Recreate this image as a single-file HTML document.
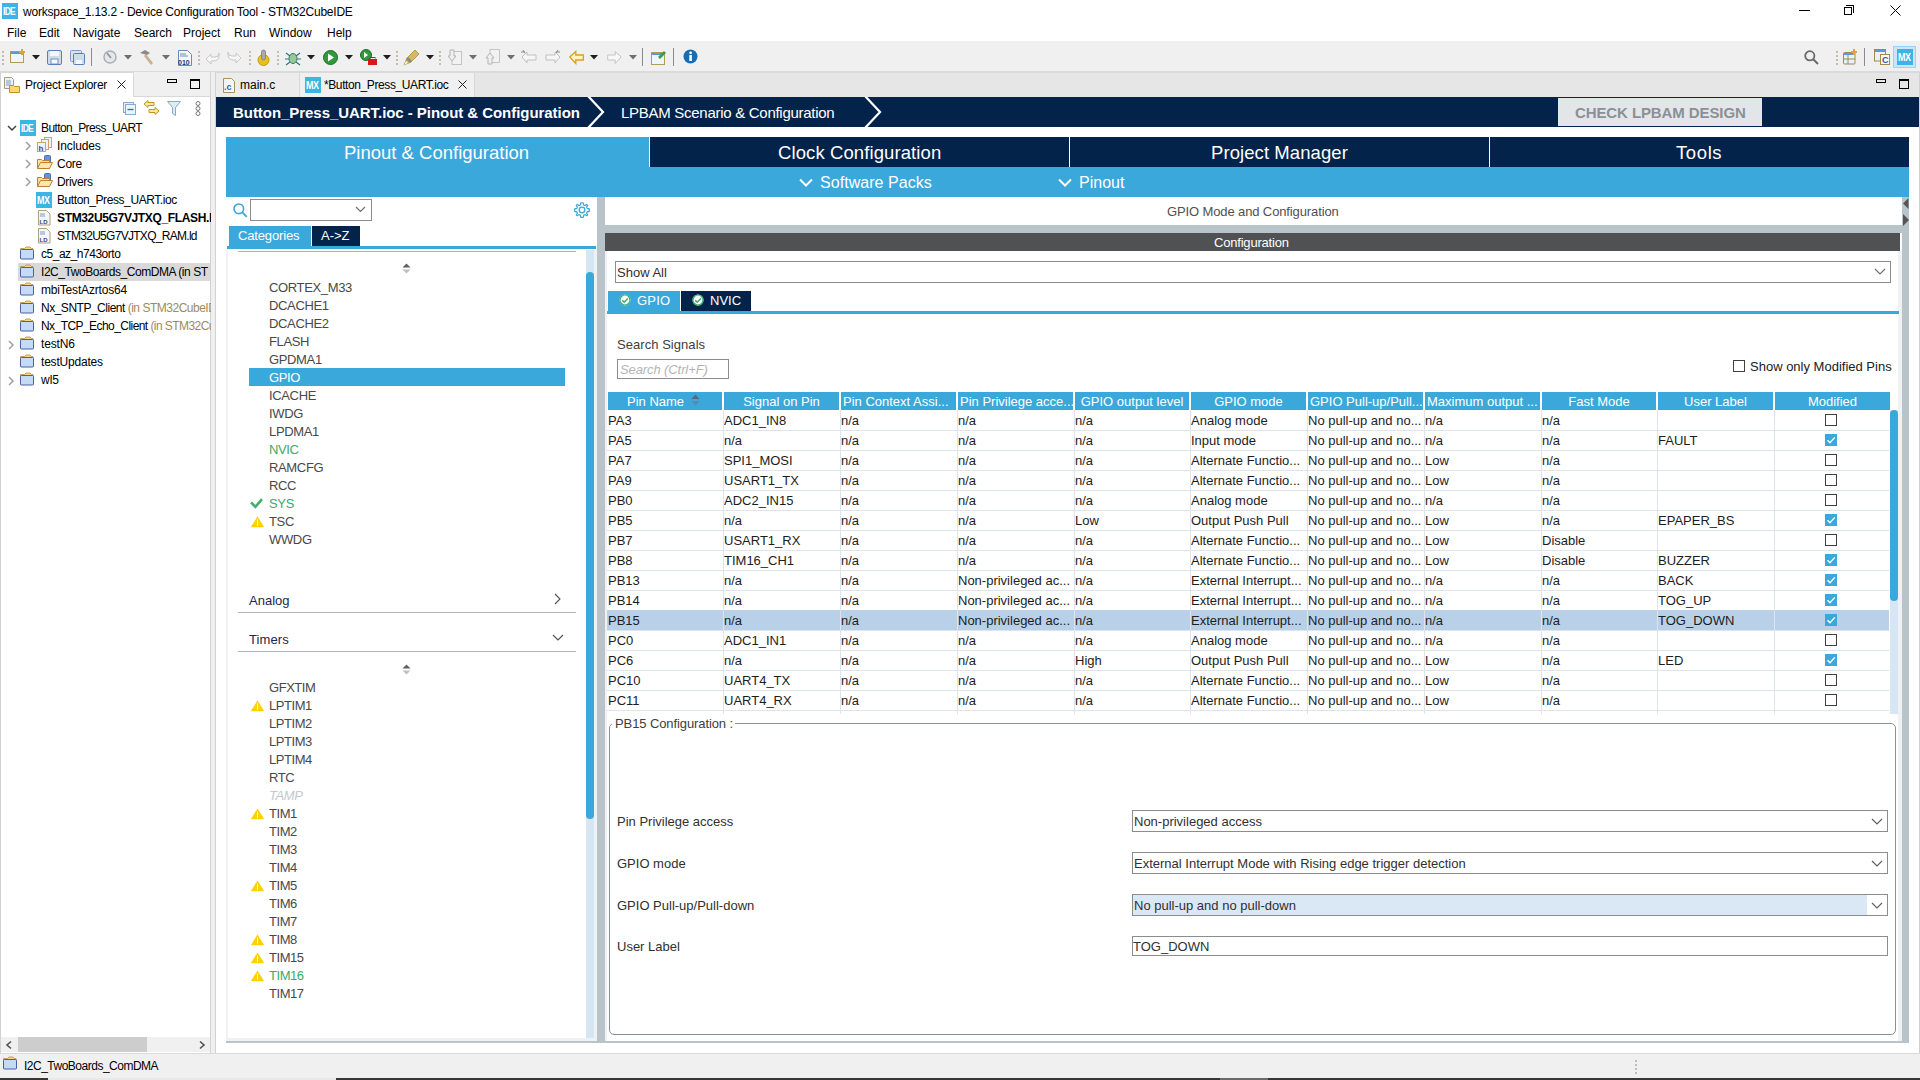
<!DOCTYPE html>
<html><head><meta charset="utf-8">
<style>
*{box-sizing:border-box;margin:0;padding:0}
html,body{width:1920px;height:1080px;overflow:hidden;background:#fff;font-family:"Liberation Sans",sans-serif;font-size:12px;color:#000}
.a{position:absolute}
.t{position:absolute;white-space:nowrap;line-height:1}
svg{position:absolute;overflow:visible}
</style></head><body>

<!-- ===== TITLE BAR ===== -->
<div class="a" style="left:2px;top:3px;width:16px;height:16px;background:#3cb4e6"></div>
<div class="t" style="left:3px;top:7px;font-size:8.5px;font-weight:bold;color:#fff;letter-spacing:-0.7px;transform:scaleY(1.2);transform-origin:0 0">IDE</div>
<div class="t" style="left:23px;top:6px;font-size:12px;letter-spacing:-0.22px">workspace_1.13.2 - Device Configuration Tool - STM32CubeIDE</div>
<div class="a" style="left:1799px;top:10px;width:11px;height:1px;background:#000"></div>
<div class="a" style="left:1844px;top:7px;width:8px;height:8px;border:1px solid #000"></div>
<div class="a" style="left:1846px;top:5px;width:8px;height:8px;border-top:1px solid #000;border-right:1px solid #000"></div>
<svg style="left:1890px;top:5px" width="11" height="11"><path d="M0.5 0.5L10.5 10.5M10.5 0.5L0.5 10.5" stroke="#000" stroke-width="1"/></svg>

<!-- ===== MENU BAR ===== -->
<div class="t" style="left:7px;top:27px">File</div>
<div class="t" style="left:39px;top:27px">Edit</div>
<div class="t" style="left:73px;top:27px">Navigate</div>
<div class="t" style="left:134px;top:27px">Search</div>
<div class="t" style="left:183px;top:27px">Project</div>
<div class="t" style="left:234px;top:27px">Run</div>
<div class="t" style="left:269px;top:27px">Window</div>
<div class="t" style="left:327px;top:27px">Help</div>

<!-- ===== TOOLBAR ===== -->
<div class="a" style="left:0;top:41px;width:1920px;height:30px;background:#f0f0f0"></div>
<div class="a" style="left:0;top:71px;width:1920px;height:1px;background:#dadada"></div>
<div class="a" style="left:2px;top:51px;width:2px;height:2px;background:#c4bcae"></div>
<div class="a" style="left:2px;top:55px;width:2px;height:2px;background:#c4bcae"></div>
<div class="a" style="left:2px;top:59px;width:2px;height:2px;background:#c4bcae"></div>
<div class="a" style="left:2px;top:63px;width:2px;height:2px;background:#c4bcae"></div>
<svg style="left:10px;top:49px" width="16" height="16"><rect x="0.5" y="2.5" width="13" height="11" fill="#eef6fc" stroke="#b09a5c"/><rect x="1" y="3" width="12" height="2" fill="#5a9ad8"/><path d="M12 0v6M9 3h6" stroke="#d8a838" stroke-width="2"/></svg>
<svg style="left:32px;top:55px" width="8" height="5"><path d="M0 0H8L4 4.5Z" fill="#1e1e1e"/></svg>
<svg style="left:47px;top:50px" width="16" height="16"><rect x="0.5" y="0.5" width="14" height="14" rx="1.5" fill="#cfdcec" stroke="#5a7fb8"/><rect x="3" y="1" width="9" height="5" fill="#f4f8fc"/><rect x="4" y="9" width="7" height="5" fill="#f4f8fc" stroke="#5a7fb8" stroke-width="0.8"/></svg>
<svg style="left:70px;top:50px" width="16" height="16"><rect x="0.5" y="0.5" width="11" height="11" rx="1" fill="#d8e2ee" stroke="#7d9cc8"/><rect x="3.5" y="3.5" width="11" height="11" rx="1" fill="#cfdcec" stroke="#5a7fb8"/><rect x="6" y="10" width="6" height="4" fill="#f4f8fc"/></svg>
<div class="a" style="left:91px;top:48px;width:1px;height:18px;background:#8c8c8c"></div>
<svg style="left:103px;top:50px" width="14" height="14"><circle cx="7" cy="7" r="6" fill="#e4e8ec" stroke="#a8b0b8" stroke-width="1.5"/><path d="M4 3l4 5" stroke="#989898" stroke-width="2"/></svg>
<svg style="left:124px;top:55px" width="8" height="5"><path d="M0 0H8L4 4.5Z" fill="#6e6e6e"/></svg>
<svg style="left:139px;top:49px" width="17" height="17"><path d="M1 4l5-3 5 3-3 2z" fill="#8a8a8a"/><path d="M7 5l7 9-2 2-7-9z" fill="#c8b090"/></svg>
<svg style="left:162px;top:55px" width="8" height="5"><path d="M0 0H8L4 4.5Z" fill="#6e6e6e"/></svg>
<svg style="left:178px;top:50px" width="14" height="16"><path d="M0.5 0.5h9l4 4v11h-13z" fill="#f4f6fa" stroke="#6a8ab8"/><path d="M2 4h6M2 6h8" stroke="#6a8ab8"/><text x="0" y="15" font-size="7" font-family="Liberation Sans" font-weight="bold" fill="#1a3a7a">010</text></svg>
<div class="a" style="left:198px;top:51px;width:2px;height:2px;background:#c4bcae"></div>
<div class="a" style="left:198px;top:55px;width:2px;height:2px;background:#c4bcae"></div>
<div class="a" style="left:198px;top:59px;width:2px;height:2px;background:#c4bcae"></div>
<div class="a" style="left:198px;top:63px;width:2px;height:2px;background:#c4bcae"></div>
<svg style="left:205px;top:50px" width="16" height="15"><path d="M1 9l5-5v3h4a4 4 0 0 0 4-4v3a5 5 0 0 1-5 5h-3v3z" fill="#f6f6f6" stroke="#c8c8c8"/></svg>
<svg style="left:227px;top:49px" width="14" height="15"><path d="M14 9l-5-5v3h-4a4 4 0 0 1-4-4v3a5 5 0 0 0 5 5h3v3z" fill="#f6f6f6" stroke="#c8c8c8"/></svg>
<div class="a" style="left:249px;top:51px;width:2px;height:2px;background:#c4bcae"></div>
<div class="a" style="left:249px;top:55px;width:2px;height:2px;background:#c4bcae"></div>
<div class="a" style="left:249px;top:59px;width:2px;height:2px;background:#c4bcae"></div>
<div class="a" style="left:249px;top:63px;width:2px;height:2px;background:#c4bcae"></div>
<svg style="left:256px;top:49px" width="15" height="16"><circle cx="7.5" cy="11" r="5.5" fill="#e8c020" stroke="#c89a10"/><rect x="5.5" y="1" width="4" height="10" rx="2" fill="#a8a8b0" stroke="#7c7c84" stroke-width="0.8"/></svg>
<div class="a" style="left:277px;top:51px;width:2px;height:2px;background:#c4bcae"></div>
<div class="a" style="left:277px;top:55px;width:2px;height:2px;background:#c4bcae"></div>
<div class="a" style="left:277px;top:59px;width:2px;height:2px;background:#c4bcae"></div>
<div class="a" style="left:277px;top:63px;width:2px;height:2px;background:#c4bcae"></div>
<svg style="left:285px;top:50px" width="16" height="15"><ellipse cx="8" cy="8.5" rx="4" ry="5" fill="#9cc890" stroke="#2a7a7a"/><path d="M1 3l4 3M15 3l-4 3M0 9h4M12 9h4M1 15l4-3M15 15l-4-3" stroke="#2a7a7a" stroke-width="1.2"/></svg>
<svg style="left:307px;top:55px" width="8" height="5"><path d="M0 0H8L4 4.5Z" fill="#1e1e1e"/></svg>
<svg style="left:323px;top:50px" width="15" height="15"><circle cx="7.5" cy="7.5" r="7" fill="#2e9a3c" stroke="#1c6e28"/><path d="M5 3.5l6 4-6 4z" fill="#fff"/></svg>
<svg style="left:345px;top:55px" width="8" height="5"><path d="M0 0H8L4 4.5Z" fill="#1e1e1e"/></svg>
<svg style="left:360px;top:49px" width="17" height="17"><circle cx="6" cy="6" r="5.5" fill="#2e9a3c" stroke="#1c6e28"/><path d="M4 3l4 3-4 3z" fill="#fff"/><rect x="8" y="10" width="9" height="6" fill="#d81818"/><rect x="10" y="8.5" width="5" height="2" fill="none" stroke="#d81818"/></svg>
<svg style="left:383px;top:55px" width="8" height="5"><path d="M0 0H8L4 4.5Z" fill="#1e1e1e"/></svg>
<div class="a" style="left:396px;top:51px;width:2px;height:2px;background:#c4bcae"></div>
<div class="a" style="left:396px;top:55px;width:2px;height:2px;background:#c4bcae"></div>
<div class="a" style="left:396px;top:59px;width:2px;height:2px;background:#c4bcae"></div>
<div class="a" style="left:396px;top:63px;width:2px;height:2px;background:#c4bcae"></div>
<svg style="left:403px;top:49px" width="17" height="17"><path d="M1 16l3-7 8-8 4 4-8 8z" fill="#d8b868" stroke="#b08830" stroke-width="0.8"/><path d="M4 9l4 4" stroke="#8a8a8a" stroke-width="3"/><path d="M1 16l2-4 2 2z" fill="#fff8c0"/></svg>
<svg style="left:426px;top:55px" width="8" height="5"><path d="M0 0H8L4 4.5Z" fill="#1e1e1e"/></svg>
<div class="a" style="left:439px;top:51px;width:2px;height:2px;background:#c4bcae"></div>
<div class="a" style="left:439px;top:55px;width:2px;height:2px;background:#c4bcae"></div>
<div class="a" style="left:439px;top:59px;width:2px;height:2px;background:#c4bcae"></div>
<div class="a" style="left:439px;top:63px;width:2px;height:2px;background:#c4bcae"></div>
<svg style="left:447px;top:49px" width="15" height="16"><rect x="5" y="2.5" width="9.5" height="13" fill="#f2f2f2" stroke="#c4c4c4"/><path d="M3 1v6h-2l4 5 4-5h-2v-6z" fill="#f0f0f0" stroke="#b4b4b4"/></svg>
<svg style="left:469px;top:55px" width="8" height="5"><path d="M0 0H8L4 4.5Z" fill="#6e6e6e"/></svg>
<svg style="left:485px;top:49px" width="15" height="16"><rect x="5" y="0.5" width="9.5" height="13" fill="#f2f2f2" stroke="#c4c4c4"/><path d="M3 15v-6h-2l4-5 4 5h-2v6z" fill="#f0f0f0" stroke="#b4b4b4"/></svg>
<svg style="left:507px;top:55px" width="8" height="5"><path d="M0 0H8L4 4.5Z" fill="#6e6e6e"/></svg>
<svg style="left:521px;top:50px" width="17" height="14"><path d="M1 7l5-5v3h9v5h-9v3z" fill="#f6f6f6" stroke="#c0c0c0"/><path d="M2 0l2 3M0 2h4" stroke="#888"/></svg>
<svg style="left:544px;top:50px" width="17" height="14"><path d="M16 7l-5-5v3h-9v5h9v3z" fill="#f6f6f6" stroke="#c0c0c0"/><path d="M14 0l-2 3M16 2h-4" stroke="#888"/></svg>
<svg style="left:569px;top:50px" width="15" height="14"><path d="M0.8 7l6-5.5v3.5h7.5v5h-7.5v3.5z" fill="#fff4c0" stroke="#d8a020" stroke-width="1.3"/></svg>
<svg style="left:590px;top:55px" width="8" height="5"><path d="M0 0H8L4 4.5Z" fill="#1e1e1e"/></svg>
<svg style="left:607px;top:50px" width="15" height="14"><path d="M14.2 7l-6-5.5v3.5h-7.5v5h7.5v3.5z" fill="#f8f8f8" stroke="#c4c4c4" stroke-width="1"/></svg>
<svg style="left:629px;top:55px" width="8" height="5"><path d="M0 0H8L4 4.5Z" fill="#6e6e6e"/></svg>
<div class="a" style="left:642px;top:48px;width:1px;height:18px;background:#8c8c8c"></div>
<svg style="left:651px;top:49px" width="17" height="17"><rect x="0.5" y="3.5" width="13" height="12" fill="#eef6fc" stroke="#b09a5c"/><rect x="1" y="4" width="12" height="2" fill="#5a9ad8"/><path d="M9 10l6-6-2-2-6 6z" fill="#3c9a48"/></svg>
<div class="a" style="left:673px;top:48px;width:1px;height:18px;background:#8c8c8c"></div>
<svg style="left:683px;top:49px" width="15" height="15"><circle cx="7.5" cy="7.5" r="7" fill="#1a6cb0"/><rect x="6.3" y="6" width="2.6" height="6" fill="#fff"/><circle cx="7.6" cy="3.8" r="1.4" fill="#fff"/></svg>
<svg style="left:1804px;top:50px" width="15" height="15"><circle cx="5.8" cy="5.8" r="4.6" fill="none" stroke="#6a6a6a" stroke-width="1.8"/><path d="M9 9l5 5" stroke="#6a6a6a" stroke-width="2"/></svg>
<div class="a" style="left:1836px;top:51px;width:2px;height:2px;background:#c4bcae"></div>
<div class="a" style="left:1836px;top:55px;width:2px;height:2px;background:#c4bcae"></div>
<div class="a" style="left:1836px;top:59px;width:2px;height:2px;background:#c4bcae"></div>
<div class="a" style="left:1836px;top:63px;width:2px;height:2px;background:#c4bcae"></div>
<svg style="left:1843px;top:49px" width="16" height="16"><rect x="0.5" y="3.5" width="11.5" height="11.5" rx="1" fill="#e8f2fa" stroke="#a08a50"/><rect x="1" y="4" width="11" height="2" fill="#5a9ad8"/><path d="M5 6v9M1 10h11" stroke="#a08a50"/><path d="M11 0v6M8 3h6" stroke="#d8a838" stroke-width="2"/></svg>
<div class="a" style="left:1864px;top:48px;width:1px;height:18px;background:#8c8c8c"></div>
<svg style="left:1874px;top:49px" width="16" height="16"><rect x="0.5" y="0.5" width="11" height="11.5" fill="#e8f2fa" stroke="#a08a50"/><rect x="1" y="1" width="10" height="2" fill="#5a9ad8"/><rect x="6.5" y="5.5" width="9" height="10" fill="#f8f8f8" stroke="#a08a50"/><text x="8" y="14" font-size="9" font-weight="bold" font-family="Liberation Sans" fill="#2a5aa0">C</text></svg>
<div class="a" style="left:1893px;top:46px;width:23px;height:22px;background:#cce4f7;border:1px solid #99d1ff"></div>
<div class="a" style="left:1897px;top:49px;width:16px;height:16px;background:#3cb4e6"></div>
<div class="t" style="left:1898px;top:53px;font-size:9px;font-weight:bold;color:#fff;letter-spacing:-0.6px;transform:scaleY(1.15);transform-origin:0 0">MX</div>

<!-- ===== LEFT PANEL ===== -->
<div class="a" style="left:0;top:0;width:211px;height:1080px;overflow:hidden">
<div class="a" style="left:0;top:72px;width:211px;height:982px;border:1px solid #d2d2d2;border-top:none;background:#fff"></div>
<div class="a" style="left:1px;top:72px;width:209px;height:25px;background:#f0f0f0"></div>
<div class="a" style="left:134px;top:96px;width:76px;height:1px;background:#d8d8d8"></div>
<div class="a" style="left:1px;top:72px;width:133px;height:25px;background:#fff;border-right:1px solid #d8d8d8;border-top:1px solid #d8d8d8"></div>
<svg style="left:4px;top:77px" width="16" height="16"><path d="M0.5 0.5h7l2 2v9h-9z" fill="#eef2f8" stroke="#a89a78"/><path d="M2 4h5M2 6h5M2 8h5" stroke="#7a9ad0"/><path d="M5.5 8.5h4l1 1h5v6h-10z" fill="#f8d878" stroke="#c0902a"/></svg>
<div class="t" style="left:25px;top:79px;letter-spacing:-0.2px">Project Explorer</div>
<svg style="left:117px;top:80px" width="9" height="9"><path d="M0.5 0.5L8.5 8.5M8.5 0.5L0.5 8.5" stroke="#202020" stroke-width="1"/></svg>
<div class="a" style="left:167px;top:79px;width:10px;height:4px;border:1.5px solid #000"></div>
<div class="a" style="left:190px;top:79px;width:10px;height:10px;border:1.5px solid #000;border-top-width:2.5px"></div>
<svg style="left:123px;top:102px" width="14" height="13"><rect x="0.5" y="0.5" width="10" height="10" fill="#e6f0fa" stroke="#8aa8d0"/><rect x="2.5" y="2.5" width="10" height="10" fill="#eaf4fc" stroke="#8aa8d0"/><path d="M4.5 7.5h6" stroke="#2a6ab0" stroke-width="1.3"/></svg>
<svg style="left:143px;top:100px" width="17" height="16"><path d="M1 4l4-3.5v2h6v3h-6v2z" fill="#fce8a0" stroke="#c89020"/><path d="M16 11l-4-3.5v2h-6v3h6v2z" fill="#fce8a0" stroke="#c89020"/></svg>
<svg style="left:167px;top:101px" width="14" height="15"><path d="M0.5 0.5h13l-5 6v8l-3 -2v-6z" fill="#dcecf8" stroke="#8aa8c8"/></svg>
<svg style="left:195px;top:101px" width="6" height="15"><circle cx="3" cy="2.5" r="2" fill="none" stroke="#777"/><circle cx="3" cy="7.5" r="2" fill="none" stroke="#777"/><circle cx="3" cy="12.5" r="2" fill="none" stroke="#777"/></svg>
<svg style="left:7px;top:125px" width="10" height="6"><path d="M1 1l4 4 4-4" fill="none" stroke="#404040" stroke-width="1.5"/></svg>
<div class="a" style="left:20px;top:120px;width:16px;height:16px;background:#3cb4e6"></div>
<div class="t" style="left:21px;top:124px;font-size:8.5px;font-weight:bold;color:#fff;letter-spacing:-0.7px;transform:scaleY(1.2);transform-origin:0 0">IDE</div>
<div class="t" style="left:41px;top:122px;letter-spacing:-0.6px">Button_Press_UART</div>
<svg style="left:25px;top:141px" width="6" height="10"><path d="M1 1l4 4-4 4" fill="none" stroke="#a0a0a0" stroke-width="1.5"/></svg>
<svg style="left:37px;top:137px" width="16" height="16"><rect x="7.5" y="0.5" width="7" height="10" fill="#eef2fa" stroke="#c8a860"/><rect x="4.5" y="2.5" width="7" height="10" fill="#eef2fa" stroke="#c8a860"/><rect x="0.5" y="5.5" width="8" height="9" fill="#eef2fa" stroke="#c8a860"/><text x="1.5" y="13.5" font-size="8" font-weight="bold" font-family="Liberation Sans" fill="#3a4a7a">h</text></svg>
<div class="t" style="left:57px;top:140px;letter-spacing:-0.12px">Includes</div>
<svg style="left:25px;top:159px" width="6" height="10"><path d="M1 1l4 4-4 4" fill="none" stroke="#a0a0a0" stroke-width="1.5"/></svg>
<svg style="left:37px;top:155px" width="16" height="16"><rect x="7.5" y="0.5" width="6" height="7" rx="1" fill="#6a90d8" stroke="#4a70b8"/><path d="M0.5 4.5h4l1 1h7v8h-12z" fill="#f8e0a0" stroke="#c08030"/><path d="M0.5 13.5l3-6h12l-3 6z" fill="#fae8b0" stroke="#c08030"/></svg>
<div class="t" style="left:57px;top:158px;letter-spacing:-0.25px">Core</div>
<svg style="left:25px;top:177px" width="6" height="10"><path d="M1 1l4 4-4 4" fill="none" stroke="#a0a0a0" stroke-width="1.5"/></svg>
<svg style="left:37px;top:173px" width="16" height="16"><rect x="7.5" y="0.5" width="6" height="7" rx="1" fill="#6a90d8" stroke="#4a70b8"/><path d="M0.5 4.5h4l1 1h7v8h-12z" fill="#f8e0a0" stroke="#c08030"/><path d="M0.5 13.5l3-6h12l-3 6z" fill="#fae8b0" stroke="#c08030"/></svg>
<div class="t" style="left:57px;top:176px;letter-spacing:-0.33px">Drivers</div>
<div class="a" style="left:36px;top:192px;width:16px;height:16px;background:#3cb4e6"></div>
<div class="t" style="left:37px;top:196px;font-size:9px;font-weight:bold;color:#fff;letter-spacing:-0.6px;transform:scaleY(1.15);transform-origin:0 0">MX</div>
<div class="t" style="left:57px;top:194px;letter-spacing:-0.41px">Button_Press_UART.ioc</div>
<svg style="left:38px;top:210px" width="13" height="16"><path d="M0.5 0.5h8l3.5 3.5v11h-11.5z" fill="#f4f6fa" stroke="#b0a080"/><path d="M2 4h5M2 6h5" stroke="#7a9ad0"/><text x="1.5" y="14" font-size="6" font-weight="bold" font-family="Liberation Sans" fill="#3a4a7a">LD</text></svg>
<div class="t" style="left:57px;top:212px;font-weight:bold;letter-spacing:-0.35px">STM32U5G7VJTXQ_FLASH.ld</div>
<svg style="left:38px;top:228px" width="13" height="16"><path d="M0.5 0.5h8l3.5 3.5v11h-11.5z" fill="#f4f6fa" stroke="#b0a080"/><path d="M2 4h5M2 6h5" stroke="#7a9ad0"/><text x="1.5" y="14" font-size="6" font-weight="bold" font-family="Liberation Sans" fill="#3a4a7a">LD</text></svg>
<div class="t" style="left:57px;top:230px;letter-spacing:-0.71px">STM32U5G7VJTXQ_RAM.ld</div>
<div class="a" style="left:18px;top:263px;width:192px;height:18px;background:#d9d9d9"></div>
<svg style="left:19px;top:245px" width="16" height="16"><path d="M1.5 3.5h4l1.5 -1.5h4l1.5 1.5h1.5v10h-12.5z" fill="#f4d880" stroke="#b89040" stroke-width="0.8"/><rect x="1.5" y="4.5" width="13" height="9.5" rx="1" fill="#c4daf6" stroke="#4860a8"/></svg>
<div class="t" style="left:41px;top:248px;letter-spacing:-0.48px">c5_az_h743orto</div>
<svg style="left:19px;top:263px" width="16" height="16"><path d="M1.5 3.5h4l1.5 -1.5h4l1.5 1.5h1.5v10h-12.5z" fill="#f4d880" stroke="#b89040" stroke-width="0.8"/><rect x="1.5" y="4.5" width="13" height="9.5" rx="1" fill="#c4daf6" stroke="#4860a8"/></svg>
<div class="t" style="left:41px;top:266px;letter-spacing:-0.45px">I2C_TwoBoards_ComDMA (in ST</div>
<svg style="left:19px;top:281px" width="16" height="16"><path d="M1.5 3.5h4l1.5 -1.5h4l1.5 1.5h1.5v10h-12.5z" fill="#f4d880" stroke="#b89040" stroke-width="0.8"/><rect x="1.5" y="4.5" width="13" height="9.5" rx="1" fill="#c4daf6" stroke="#4860a8"/></svg>
<div class="t" style="left:41px;top:284px;letter-spacing:-0.18px">mbiTestAzrtos64</div>
<svg style="left:19px;top:299px" width="16" height="16"><path d="M1.5 3.5h4l1.5 -1.5h4l1.5 1.5h1.5v10h-12.5z" fill="#f4d880" stroke="#b89040" stroke-width="0.8"/><rect x="1.5" y="4.5" width="13" height="9.5" rx="1" fill="#c4daf6" stroke="#4860a8"/></svg>
<div class="t" style="left:41px;top:302px;letter-spacing:-0.49px">Nx_SNTP_Client<span style="color:#a08a5c"> (in STM32CubeIDE</span></div>
<svg style="left:19px;top:317px" width="16" height="16"><path d="M1.5 3.5h4l1.5 -1.5h4l1.5 1.5h1.5v10h-12.5z" fill="#f4d880" stroke="#b89040" stroke-width="0.8"/><rect x="1.5" y="4.5" width="13" height="9.5" rx="1" fill="#c4daf6" stroke="#4860a8"/></svg>
<div class="t" style="left:41px;top:320px;letter-spacing:-0.56px">Nx_TCP_Echo_Client<span style="color:#a08a5c"> (in STM32CubeIDE</span></div>
<svg style="left:8px;top:340px" width="6" height="10"><path d="M1 1l4 4-4 4" fill="none" stroke="#a0a0a0" stroke-width="1.5"/></svg>
<svg style="left:19px;top:335px" width="16" height="16"><path d="M1.5 3.5h4l1.5 -1.5h4l1.5 1.5h1.5v10h-12.5z" fill="#f4d880" stroke="#b89040" stroke-width="0.8"/><rect x="1.5" y="4.5" width="13" height="9.5" rx="1" fill="#c4daf6" stroke="#4860a8"/></svg>
<div class="t" style="left:41px;top:338px;letter-spacing:-0.13px">testN6</div>
<svg style="left:19px;top:353px" width="16" height="16"><path d="M1.5 3.5h4l1.5 -1.5h4l1.5 1.5h1.5v10h-12.5z" fill="#f4d880" stroke="#b89040" stroke-width="0.8"/><rect x="1.5" y="4.5" width="13" height="9.5" rx="1" fill="#c4daf6" stroke="#4860a8"/></svg>
<div class="t" style="left:41px;top:356px;letter-spacing:-0.2px">testUpdates</div>
<svg style="left:8px;top:376px" width="6" height="10"><path d="M1 1l4 4-4 4" fill="none" stroke="#a0a0a0" stroke-width="1.5"/></svg>
<svg style="left:19px;top:371px" width="16" height="16"><path d="M1.5 3.5h4l1.5 -1.5h4l1.5 1.5h1.5v10h-12.5z" fill="#f4d880" stroke="#b89040" stroke-width="0.8"/><rect x="1.5" y="4.5" width="13" height="9.5" rx="1" fill="#c4daf6" stroke="#4860a8"/></svg>
<div class="t" style="left:41px;top:374px;letter-spacing:0px">wl5</div>

<div class="a" style="left:1px;top:1037px;width:209px;height:15px;background:#f0f0f0"></div>
<div class="a" style="left:18px;top:1037px;width:129px;height:15px;background:#cdcdcd"></div>
<svg style="left:6px;top:1041px" width="6" height="8"><path d="M5 0.5l-4 3.5 4 3.5" fill="none" stroke="#505050" stroke-width="1.6"/></svg>
<svg style="left:199px;top:1041px" width="6" height="8"><path d="M1 0.5l4 3.5-4 3.5" fill="none" stroke="#505050" stroke-width="1.6"/></svg>
</div>
<!-- ===== EDITOR TOP ===== -->
<div class="a" style="left:211px;top:72px;width:4px;height:982px;background:#f0f0f0"></div>
<div class="a" style="left:215px;top:72px;width:1705px;height:982px;border:1px solid #d2d2d2;border-top:none;background:#fff"></div>
<div class="a" style="left:216px;top:72px;width:1703px;height:25px;background:#e6e6e6;border-top:1px solid #dadada"></div>
<div class="a" style="left:216px;top:73px;width:84px;height:24px;background:#ececec;border-right:1px solid #d8d8d8"></div>
<div class="a" style="left:300px;top:73px;width:175px;height:24px;background:#f0f0f0;border-right:1px solid #d8d8d8"></div>
<svg style="left:223px;top:78px" width="12" height="15"><path d="M0.5 0.5h8l3 3v11h-11z" fill="#f4f6fa" stroke="#a89060"/><text x="1" y="12" font-size="9" font-weight="bold" font-family="Liberation Sans" fill="#2a6aa0">.c</text></svg>
<div class="t" style="left:240px;top:79px">main.c</div>
<div class="a" style="left:305px;top:77px;width:16px;height:16px;background:#3cb4e6"></div>
<div class="t" style="left:306px;top:81px;font-size:9px;font-weight:bold;color:#fff;letter-spacing:-0.6px;transform:scaleY(1.15);transform-origin:0 0">MX</div>
<div class="t" style="left:324px;top:79px;letter-spacing:-0.4px">*Button_Press_UART.ioc</div>
<svg style="left:458px;top:80px" width="9" height="9"><path d="M0.5 0.5L8.5 8.5M8.5 0.5L0.5 8.5" stroke="#202020" stroke-width="1"/></svg>
<div class="a" style="left:1876px;top:79px;width:10px;height:4px;border:1.5px solid #000"></div>
<div class="a" style="left:1899px;top:79px;width:10px;height:10px;border:1.5px solid #000;border-top-width:2.5px"></div>
<div class="a" style="left:216px;top:97px;width:1703px;height:30px;background:#03234b"></div>
<div class="t" style="left:233px;top:105px;font-size:15px;font-weight:bold;color:#fff;letter-spacing:-0.05px">Button_Press_UART.ioc - Pinout &amp; Configuration</div>
<svg style="left:586px;top:97px;overflow:hidden" width="20" height="30"><path d="M2 -1L17 15L2 31" fill="none" stroke="#fff" stroke-width="2.2"/></svg>
<div class="t" style="left:621px;top:105px;font-size:15px;color:#fff;letter-spacing:-0.28px">LPBAM Scenario &amp; Configuration</div>
<svg style="left:863px;top:97px;overflow:hidden" width="20" height="30"><path d="M2 -1L17 15L2 31" fill="none" stroke="#fff" stroke-width="2.2"/></svg>
<div class="a" style="left:1558px;top:98px;width:204px;height:28px;background:#e3e6e9"></div>
<div class="t" style="left:1575px;top:105px;font-size:15px;font-weight:bold;color:#8a9096;letter-spacing:-0.1px">CHECK LPBAM DESIGN</div>
<div class="a" style="left:226px;top:137px;width:1683px;height:60px;background:#3aa8db"></div>
<div class="a" style="left:650px;top:137px;width:419px;height:30px;background:#03234b"></div>
<div class="a" style="left:1070px;top:137px;width:419px;height:30px;background:#03234b"></div>
<div class="a" style="left:1490px;top:137px;width:419px;height:30px;background:#03234b"></div>
<div class="a" style="left:649px;top:137px;width:1px;height:30px;background:#fff"></div>
<div class="a" style="left:1069px;top:137px;width:1px;height:30px;background:#fff"></div>
<div class="a" style="left:1489px;top:137px;width:1px;height:30px;background:#fff"></div>
<div class="t" style="left:344px;top:144px;font-size:18.5px;color:#fff">Pinout &amp; Configuration</div>
<div class="t" style="left:778px;top:144px;font-size:18.5px;color:#fff;letter-spacing:0.1px">Clock Configuration</div>
<div class="t" style="left:1211px;top:144px;font-size:18.5px;color:#fff;letter-spacing:0.08px">Project Manager</div>
<div class="t" style="left:1676px;top:144px;font-size:18.5px;color:#fff;letter-spacing:0.6px">Tools</div>
<svg style="left:799px;top:178px" width="14" height="9"><path d="M1 1.5l6 6 6-6" fill="none" stroke="#fff" stroke-width="2"/></svg>
<div class="t" style="left:820px;top:175px;font-size:16px;color:#fff;letter-spacing:0.05px">Software Packs</div>
<svg style="left:1058px;top:178px" width="14" height="9"><path d="M1 1.5l6 6 6-6" fill="none" stroke="#fff" stroke-width="2"/></svg>
<div class="t" style="left:1079px;top:175px;font-size:16px;color:#fff">Pinout</div>
<!-- ===== MX CONTENT ===== -->
<svg style="left:233px;top:203px" width="15" height="15"><circle cx="5.8" cy="5.8" r="4.8" fill="none" stroke="#3aa8db" stroke-width="1.6"/><path d="M9.2 9.2l4.6 4.6" stroke="#3aa8db" stroke-width="1.8"/></svg>
<div class="a" style="left:250px;top:199px;width:122px;height:22px;border:1px solid #8c8c8c;background:#fff"></div>
<svg style="left:355px;top:206px" width="11" height="7"><path d="M1 1l4.5 4.5 4.5-4.5" fill="none" stroke="#707070" stroke-width="1.2"/></svg>
<svg style="left:574px;top:202px" width="16" height="16"><path d="M8 0.8l1.3 0.2 0.4 2 1.3 0.6 1.7-1.1 1 0.9-1.1 1.7 0.6 1.3 2 0.4 0.2 1.3-0.2 1.3-2 0.4-0.6 1.3 1.1 1.7-1 0.9-1.7-1.1-1.3 0.6-0.4 2-1.3 0.2-1.3-0.2-0.4-2-1.3-0.6-1.7 1.1-1-0.9 1.1-1.7-0.6-1.3-2-0.4-0.2-1.3 0.2-1.3 2-0.4 0.6-1.3-1.1-1.7 1-0.9 1.7 1.1 1.3-0.6 0.4-2z" fill="none" stroke="#3aa8db" stroke-width="1.2"/><circle cx="8" cy="8" r="2.8" fill="none" stroke="#3aa8db" stroke-width="1.3"/></svg>
<div class="a" style="left:229px;top:226px;width:82px;height:20px;background:#3aa8db"></div>
<div class="t" style="left:238px;top:229px;font-size:13px;color:#fff;letter-spacing:-0.15px">Categories</div>
<div class="a" style="left:312px;top:226px;width:48px;height:20px;background:#03234b"></div>
<div class="t" style="left:321px;top:229px;font-size:13px;color:#fff">A-&gt;Z</div>
<div class="a" style="left:227px;top:246px;width:369px;height:3px;background:#3aa8db"></div>
<div class="a" style="left:238px;top:251px;width:338px;height:1px;background:#aab4be"></div>
<svg style="left:402px;top:263px" width="9" height="11"><path d="M0.5 4.5L4.5 0.5 8.5 4.5Z" fill="#606060"/><path d="M0.5 6.5L4.5 10.5 8.5 6.5Z" fill="#c0c0c0"/></svg>
<div class="t" style="left:269px;top:281px;font-size:13px;color:#484848;letter-spacing:-0.35px">CORTEX_M33</div>
<div class="t" style="left:269px;top:299px;font-size:13px;color:#484848;letter-spacing:-0.35px">DCACHE1</div>
<div class="t" style="left:269px;top:317px;font-size:13px;color:#484848;letter-spacing:-0.35px">DCACHE2</div>
<div class="t" style="left:269px;top:335px;font-size:13px;color:#484848;letter-spacing:-0.35px">FLASH</div>
<div class="t" style="left:269px;top:353px;font-size:13px;color:#484848;letter-spacing:-0.35px">GPDMA1</div>
<div class="a" style="left:249px;top:368px;width:316px;height:18px;background:#3aa8db"></div>
<div class="t" style="left:269px;top:371px;font-size:13px;color:#fff;letter-spacing:-0.35px">GPIO</div>
<div class="t" style="left:269px;top:389px;font-size:13px;color:#484848;letter-spacing:-0.35px">ICACHE</div>
<div class="t" style="left:269px;top:407px;font-size:13px;color:#484848;letter-spacing:-0.35px">IWDG</div>
<div class="t" style="left:269px;top:425px;font-size:13px;color:#484848;letter-spacing:-0.35px">LPDMA1</div>
<div class="t" style="left:269px;top:443px;font-size:13px;color:#3aaa6e;letter-spacing:-0.35px">NVIC</div>
<div class="t" style="left:269px;top:461px;font-size:13px;color:#484848;letter-spacing:-0.35px">RAMCFG</div>
<div class="t" style="left:269px;top:479px;font-size:13px;color:#484848;letter-spacing:-0.35px">RCC</div>
<svg style="left:249px;top:497px" width="15" height="12"><path d="M2 5.4L6.4 9.8L13 2.2" fill="none" stroke="#45ae6a" stroke-width="2.6"/></svg>
<div class="t" style="left:269px;top:497px;font-size:13px;color:#3aaa6e;letter-spacing:-0.35px">SYS</div>
<svg style="left:251px;top:516px" width="14" height="12"><path d="M6.5 0.6L12.8 10.4Q13.2 11.2 12.3 11.2H0.7Q-0.2 11.2 0.2 10.4Z" fill="#ffd100"/><path d="M6.5 3.6V9.6" stroke="#fff" stroke-width="1"/></svg>
<div class="t" style="left:269px;top:515px;font-size:13px;color:#484848;letter-spacing:-0.35px">TSC</div>
<div class="t" style="left:269px;top:533px;font-size:13px;color:#484848;letter-spacing:-0.35px">WWDG</div>
<div class="t" style="left:249px;top:594px;font-size:13px;color:#1e2650">Analog</div>
<svg style="left:554px;top:593px" width="8" height="12"><path d="M1 1l5 5-5 5" fill="none" stroke="#505050" stroke-width="1.1"/></svg>
<div class="a" style="left:238px;top:612px;width:338px;height:1px;background:#aab4be"></div>
<div class="t" style="left:249px;top:633px;font-size:13px;color:#1e2650;letter-spacing:0.1px">Timers</div>
<svg style="left:552px;top:634px" width="12" height="8"><path d="M1 1l5 5 5-5" fill="none" stroke="#505050" stroke-width="1.1"/></svg>
<div class="a" style="left:238px;top:651px;width:338px;height:1px;background:#aab4be"></div>
<svg style="left:402px;top:664px" width="9" height="11"><path d="M0.5 4.5L4.5 0.5 8.5 4.5Z" fill="#606060"/><path d="M0.5 6.5L4.5 10.5 8.5 6.5Z" fill="#c0c0c0"/></svg>
<div class="t" style="left:269px;top:681px;font-size:13px;color:#484848;letter-spacing:-0.45px">GFXTIM</div>
<svg style="left:251px;top:700px" width="14" height="12"><path d="M6.5 0.6L12.8 10.4Q13.2 11.2 12.3 11.2H0.7Q-0.2 11.2 0.2 10.4Z" fill="#ffd100"/><path d="M6.5 3.6V9.6" stroke="#fff" stroke-width="1"/></svg>
<div class="t" style="left:269px;top:699px;font-size:13px;color:#484848;letter-spacing:-0.45px">LPTIM1</div>
<div class="t" style="left:269px;top:717px;font-size:13px;color:#484848;letter-spacing:-0.45px">LPTIM2</div>
<div class="t" style="left:269px;top:735px;font-size:13px;color:#484848;letter-spacing:-0.45px">LPTIM3</div>
<div class="t" style="left:269px;top:753px;font-size:13px;color:#484848;letter-spacing:-0.45px">LPTIM4</div>
<div class="t" style="left:269px;top:771px;font-size:13px;color:#484848;letter-spacing:-0.45px">RTC</div>
<div class="t" style="left:269px;top:789px;font-size:13px;color:#c4c8cc;font-style:italic;letter-spacing:-0.45px">TAMP</div>
<svg style="left:251px;top:808px" width="14" height="12"><path d="M6.5 0.6L12.8 10.4Q13.2 11.2 12.3 11.2H0.7Q-0.2 11.2 0.2 10.4Z" fill="#ffd100"/><path d="M6.5 3.6V9.6" stroke="#fff" stroke-width="1"/></svg>
<div class="t" style="left:269px;top:807px;font-size:13px;color:#484848;letter-spacing:-0.45px">TIM1</div>
<div class="t" style="left:269px;top:825px;font-size:13px;color:#484848;letter-spacing:-0.45px">TIM2</div>
<div class="t" style="left:269px;top:843px;font-size:13px;color:#484848;letter-spacing:-0.45px">TIM3</div>
<div class="t" style="left:269px;top:861px;font-size:13px;color:#484848;letter-spacing:-0.45px">TIM4</div>
<svg style="left:251px;top:880px" width="14" height="12"><path d="M6.5 0.6L12.8 10.4Q13.2 11.2 12.3 11.2H0.7Q-0.2 11.2 0.2 10.4Z" fill="#ffd100"/><path d="M6.5 3.6V9.6" stroke="#fff" stroke-width="1"/></svg>
<div class="t" style="left:269px;top:879px;font-size:13px;color:#484848;letter-spacing:-0.45px">TIM5</div>
<div class="t" style="left:269px;top:897px;font-size:13px;color:#484848;letter-spacing:-0.45px">TIM6</div>
<div class="t" style="left:269px;top:915px;font-size:13px;color:#484848;letter-spacing:-0.45px">TIM7</div>
<svg style="left:251px;top:934px" width="14" height="12"><path d="M6.5 0.6L12.8 10.4Q13.2 11.2 12.3 11.2H0.7Q-0.2 11.2 0.2 10.4Z" fill="#ffd100"/><path d="M6.5 3.6V9.6" stroke="#fff" stroke-width="1"/></svg>
<div class="t" style="left:269px;top:933px;font-size:13px;color:#484848;letter-spacing:-0.45px">TIM8</div>
<svg style="left:251px;top:952px" width="14" height="12"><path d="M6.5 0.6L12.8 10.4Q13.2 11.2 12.3 11.2H0.7Q-0.2 11.2 0.2 10.4Z" fill="#ffd100"/><path d="M6.5 3.6V9.6" stroke="#fff" stroke-width="1"/></svg>
<div class="t" style="left:269px;top:951px;font-size:13px;color:#484848;letter-spacing:-0.45px">TIM15</div>
<svg style="left:251px;top:970px" width="14" height="12"><path d="M6.5 0.6L12.8 10.4Q13.2 11.2 12.3 11.2H0.7Q-0.2 11.2 0.2 10.4Z" fill="#ffd100"/><path d="M6.5 3.6V9.6" stroke="#fff" stroke-width="1"/></svg>
<div class="t" style="left:269px;top:969px;font-size:13px;color:#3aaa6e;letter-spacing:-0.45px">TIM16</div>
<div class="t" style="left:269px;top:987px;font-size:13px;color:#484848;letter-spacing:-0.45px">TIM17</div>
<div class="a" style="left:586px;top:250px;width:8px;height:788px;background:#d7e6f4"></div>
<div class="a" style="left:586px;top:272px;width:8px;height:547px;background:#3aa8db;border-radius:4px"></div>
<div class="a" style="left:594px;top:250px;width:3px;height:791px;background:#eff1f3"></div>
<div class="a" style="left:226px;top:250px;width:2px;height:791px;background:#eff1f3"></div>
<div class="a" style="left:226px;top:1038px;width:371px;height:3px;background:#eff1f3"></div>
<div class="a" style="left:597px;top:197px;width:8px;height:846px;background:#b9c4ca"></div>
<div class="a" style="left:226px;top:1041px;width:1683px;height:2px;background:#b9c4ca"></div>
<div class="a" style="left:1902px;top:197px;width:7px;height:846px;background:#b9c4ca"></div>
<svg style="left:1902px;top:197px" width="7" height="32"><path d="M6.5 1V12L1 6.5Z" fill="#555"/><path d="M1 17V29L7 23Z" fill="#555"/></svg>
<div class="t" style="left:1167px;top:205px;font-size:13px;color:#505050;letter-spacing:-0.12px">GPIO Mode and Configuration</div>
<div class="a" style="left:605px;top:225px;width:1297px;height:8px;background:#b9c4ca"></div>
<div class="a" style="left:605px;top:233px;width:1295px;height:18px;background:#505152"></div>
<div class="t" style="left:1214px;top:236px;font-size:13px;color:#fff;letter-spacing:-0.2px">Configuration</div>
<div class="a" style="left:605px;top:251px;width:2px;height:790px;background:#eff1f3"></div>
<div class="a" style="left:1898px;top:251px;width:4px;height:790px;background:#eff1f3"></div>
<div class="a" style="left:615px;top:261px;width:1276px;height:22px;border:1px solid #8c8c8c;background:#fff"></div>
<div class="t" style="left:617px;top:266px;font-size:13px;color:#303030">Show All</div>
<svg style="left:1874px;top:268px" width="12" height="7"><path d="M1 1l5 5 5-5" fill="none" stroke="#707070" stroke-width="1.2"/></svg>
<div class="a" style="left:608px;top:291px;width:72px;height:20px;background:#3aa8db"></div>
<svg style="left:619px;top:294px" width="12" height="12"><circle cx="6" cy="6" r="5.5" fill="#fff" /><circle cx="6" cy="6" r="5" fill="none" stroke="#3aaa6e" stroke-width="1.2"/><path d="M3.2 6.2l2 2 3.6-3.8" fill="none" stroke="#3aaa6e" stroke-width="1.5"/></svg>
<div class="t" style="left:637px;top:294px;font-size:13px;color:#fff;letter-spacing:0.2px">GPIO</div>
<div class="a" style="left:681px;top:291px;width:70px;height:20px;background:#03234b"></div>
<svg style="left:692px;top:294px" width="12" height="12"><circle cx="6" cy="6" r="5.5" fill="#fff" /><circle cx="6" cy="6" r="5" fill="none" stroke="#3aaa6e" stroke-width="1.2"/><path d="M3.2 6.2l2 2 3.6-3.8" fill="none" stroke="#3aaa6e" stroke-width="1.5"/></svg>
<div class="t" style="left:710px;top:294px;font-size:13px;color:#fff">NVIC</div>
<div class="a" style="left:607px;top:311px;width:1292px;height:3px;background:#3aa8db"></div>
<div class="t" style="left:617px;top:338px;font-size:13px;color:#404040;letter-spacing:0.05px">Search Signals</div>
<div class="a" style="left:617px;top:359px;width:112px;height:20px;border:1px solid #8c8c8c;background:#fff"></div>
<div class="t" style="left:620px;top:363px;font-size:13px;color:#b4b4b4;font-style:italic;letter-spacing:-0.1px">Search (Ctrl+F)</div>
<div class="a" style="left:1733px;top:360px;width:12px;height:12px;border:1px solid #404040;background:#fff"></div>
<div class="t" style="left:1750px;top:360px;font-size:13px;color:#202020">Show only Modified Pins</div>
<div class="a" style="left:608px;top:392px;width:114px;height:18px;background:#3aa8db"></div>
<div class="t" style="left:627px;top:395px;font-size:13px;color:#fff">Pin Name</div>
<div class="a" style="left:724px;top:392px;width:115px;height:18px;background:#3aa8db"></div>
<div class="t" style="left:724px;top:395px;width:115px;text-align:center;font-size:13px;color:#fff">Signal on Pin</div>
<div class="a" style="left:841px;top:392px;width:115px;height:18px;background:#3aa8db"></div>
<div class="t" style="left:843px;top:395px;font-size:13px;color:#fff">Pin Context Assi...</div>
<div class="a" style="left:958px;top:392px;width:115px;height:18px;background:#3aa8db"></div>
<div class="t" style="left:960px;top:395px;font-size:13px;color:#fff">Pin Privilege acce...</div>
<div class="a" style="left:1075px;top:392px;width:114px;height:18px;background:#3aa8db"></div>
<div class="t" style="left:1075px;top:395px;width:114px;text-align:center;font-size:13px;color:#fff">GPIO output level</div>
<div class="a" style="left:1191px;top:392px;width:115px;height:18px;background:#3aa8db"></div>
<div class="t" style="left:1191px;top:395px;width:115px;text-align:center;font-size:13px;color:#fff">GPIO mode</div>
<div class="a" style="left:1308px;top:392px;width:115px;height:18px;background:#3aa8db"></div>
<div class="t" style="left:1310px;top:395px;font-size:13px;color:#fff">GPIO Pull-up/Pull...</div>
<div class="a" style="left:1425px;top:392px;width:115px;height:18px;background:#3aa8db"></div>
<div class="t" style="left:1427px;top:395px;font-size:13px;color:#fff">Maximum output ...</div>
<div class="a" style="left:1542px;top:392px;width:114px;height:18px;background:#3aa8db"></div>
<div class="t" style="left:1542px;top:395px;width:114px;text-align:center;font-size:13px;color:#fff">Fast Mode</div>
<div class="a" style="left:1658px;top:392px;width:115px;height:18px;background:#3aa8db"></div>
<div class="t" style="left:1658px;top:395px;width:115px;text-align:center;font-size:13px;color:#fff">User Label</div>
<div class="a" style="left:1775px;top:392px;width:115px;height:18px;background:#3aa8db"></div>
<div class="t" style="left:1775px;top:395px;width:115px;text-align:center;font-size:13px;color:#fff">Modified</div>
<svg style="left:691px;top:394px" width="9" height="13"><path d="M0.5 5L4.5 0.5 8.5 5Z" fill="#5a6a78"/><path d="M0.5 7L4.5 11.5 8.5 7Z" fill="#5a8ab0"/></svg>
<div class="a" style="left:607px;top:430px;width:1282px;height:1px;background:#dfe4ea"></div>
<div class="t" style="left:608px;top:414px;font-size:13px;color:#1c1c1c">PA3</div>
<div class="t" style="left:724px;top:414px;font-size:13px;color:#1c1c1c">ADC1_IN8</div>
<div class="t" style="left:841px;top:414px;font-size:13px;color:#1c1c1c">n/a</div>
<div class="t" style="left:958px;top:414px;font-size:13px;color:#1c1c1c">n/a</div>
<div class="t" style="left:1075px;top:414px;font-size:13px;color:#1c1c1c">n/a</div>
<div class="t" style="left:1191px;top:414px;font-size:13px;color:#1c1c1c">Analog mode</div>
<div class="t" style="left:1308px;top:414px;font-size:13px;color:#1c1c1c">No pull-up and no...</div>
<div class="t" style="left:1425px;top:414px;font-size:13px;color:#1c1c1c">n/a</div>
<div class="t" style="left:1542px;top:414px;font-size:13px;color:#1c1c1c">n/a</div>
<div class="a" style="left:1825px;top:414px;width:12px;height:12px;border:1px solid #404040;background:#fff"></div>
<div class="a" style="left:607px;top:450px;width:1282px;height:1px;background:#dfe4ea"></div>
<div class="t" style="left:608px;top:434px;font-size:13px;color:#1c1c1c">PA5</div>
<div class="t" style="left:724px;top:434px;font-size:13px;color:#1c1c1c">n/a</div>
<div class="t" style="left:841px;top:434px;font-size:13px;color:#1c1c1c">n/a</div>
<div class="t" style="left:958px;top:434px;font-size:13px;color:#1c1c1c">n/a</div>
<div class="t" style="left:1075px;top:434px;font-size:13px;color:#1c1c1c">n/a</div>
<div class="t" style="left:1191px;top:434px;font-size:13px;color:#1c1c1c">Input mode</div>
<div class="t" style="left:1308px;top:434px;font-size:13px;color:#1c1c1c">No pull-up and no...</div>
<div class="t" style="left:1425px;top:434px;font-size:13px;color:#1c1c1c">n/a</div>
<div class="t" style="left:1542px;top:434px;font-size:13px;color:#1c1c1c">n/a</div>
<div class="t" style="left:1658px;top:434px;font-size:13px;color:#1c1c1c">FAULT</div>
<svg style="left:1825px;top:434px" width="12" height="12"><rect x="0" y="0" width="12" height="12" fill="#3aa8db"/><path d="M2.5 6.2l2.5 2.6 4.8-5.4" fill="none" stroke="#fff" stroke-width="1.4"/></svg>
<div class="a" style="left:607px;top:470px;width:1282px;height:1px;background:#dfe4ea"></div>
<div class="t" style="left:608px;top:454px;font-size:13px;color:#1c1c1c">PA7</div>
<div class="t" style="left:724px;top:454px;font-size:13px;color:#1c1c1c">SPI1_MOSI</div>
<div class="t" style="left:841px;top:454px;font-size:13px;color:#1c1c1c">n/a</div>
<div class="t" style="left:958px;top:454px;font-size:13px;color:#1c1c1c">n/a</div>
<div class="t" style="left:1075px;top:454px;font-size:13px;color:#1c1c1c">n/a</div>
<div class="t" style="left:1191px;top:454px;font-size:13px;color:#1c1c1c">Alternate Functio...</div>
<div class="t" style="left:1308px;top:454px;font-size:13px;color:#1c1c1c">No pull-up and no...</div>
<div class="t" style="left:1425px;top:454px;font-size:13px;color:#1c1c1c">Low</div>
<div class="t" style="left:1542px;top:454px;font-size:13px;color:#1c1c1c">n/a</div>
<div class="a" style="left:1825px;top:454px;width:12px;height:12px;border:1px solid #404040;background:#fff"></div>
<div class="a" style="left:607px;top:490px;width:1282px;height:1px;background:#dfe4ea"></div>
<div class="t" style="left:608px;top:474px;font-size:13px;color:#1c1c1c">PA9</div>
<div class="t" style="left:724px;top:474px;font-size:13px;color:#1c1c1c">USART1_TX</div>
<div class="t" style="left:841px;top:474px;font-size:13px;color:#1c1c1c">n/a</div>
<div class="t" style="left:958px;top:474px;font-size:13px;color:#1c1c1c">n/a</div>
<div class="t" style="left:1075px;top:474px;font-size:13px;color:#1c1c1c">n/a</div>
<div class="t" style="left:1191px;top:474px;font-size:13px;color:#1c1c1c">Alternate Functio...</div>
<div class="t" style="left:1308px;top:474px;font-size:13px;color:#1c1c1c">No pull-up and no...</div>
<div class="t" style="left:1425px;top:474px;font-size:13px;color:#1c1c1c">Low</div>
<div class="t" style="left:1542px;top:474px;font-size:13px;color:#1c1c1c">n/a</div>
<div class="a" style="left:1825px;top:474px;width:12px;height:12px;border:1px solid #404040;background:#fff"></div>
<div class="a" style="left:607px;top:510px;width:1282px;height:1px;background:#dfe4ea"></div>
<div class="t" style="left:608px;top:494px;font-size:13px;color:#1c1c1c">PB0</div>
<div class="t" style="left:724px;top:494px;font-size:13px;color:#1c1c1c">ADC2_IN15</div>
<div class="t" style="left:841px;top:494px;font-size:13px;color:#1c1c1c">n/a</div>
<div class="t" style="left:958px;top:494px;font-size:13px;color:#1c1c1c">n/a</div>
<div class="t" style="left:1075px;top:494px;font-size:13px;color:#1c1c1c">n/a</div>
<div class="t" style="left:1191px;top:494px;font-size:13px;color:#1c1c1c">Analog mode</div>
<div class="t" style="left:1308px;top:494px;font-size:13px;color:#1c1c1c">No pull-up and no...</div>
<div class="t" style="left:1425px;top:494px;font-size:13px;color:#1c1c1c">n/a</div>
<div class="t" style="left:1542px;top:494px;font-size:13px;color:#1c1c1c">n/a</div>
<div class="a" style="left:1825px;top:494px;width:12px;height:12px;border:1px solid #404040;background:#fff"></div>
<div class="a" style="left:607px;top:530px;width:1282px;height:1px;background:#dfe4ea"></div>
<div class="t" style="left:608px;top:514px;font-size:13px;color:#1c1c1c">PB5</div>
<div class="t" style="left:724px;top:514px;font-size:13px;color:#1c1c1c">n/a</div>
<div class="t" style="left:841px;top:514px;font-size:13px;color:#1c1c1c">n/a</div>
<div class="t" style="left:958px;top:514px;font-size:13px;color:#1c1c1c">n/a</div>
<div class="t" style="left:1075px;top:514px;font-size:13px;color:#1c1c1c">Low</div>
<div class="t" style="left:1191px;top:514px;font-size:13px;color:#1c1c1c">Output Push Pull</div>
<div class="t" style="left:1308px;top:514px;font-size:13px;color:#1c1c1c">No pull-up and no...</div>
<div class="t" style="left:1425px;top:514px;font-size:13px;color:#1c1c1c">Low</div>
<div class="t" style="left:1542px;top:514px;font-size:13px;color:#1c1c1c">n/a</div>
<div class="t" style="left:1658px;top:514px;font-size:13px;color:#1c1c1c">EPAPER_BS</div>
<svg style="left:1825px;top:514px" width="12" height="12"><rect x="0" y="0" width="12" height="12" fill="#3aa8db"/><path d="M2.5 6.2l2.5 2.6 4.8-5.4" fill="none" stroke="#fff" stroke-width="1.4"/></svg>
<div class="a" style="left:607px;top:550px;width:1282px;height:1px;background:#dfe4ea"></div>
<div class="t" style="left:608px;top:534px;font-size:13px;color:#1c1c1c">PB7</div>
<div class="t" style="left:724px;top:534px;font-size:13px;color:#1c1c1c">USART1_RX</div>
<div class="t" style="left:841px;top:534px;font-size:13px;color:#1c1c1c">n/a</div>
<div class="t" style="left:958px;top:534px;font-size:13px;color:#1c1c1c">n/a</div>
<div class="t" style="left:1075px;top:534px;font-size:13px;color:#1c1c1c">n/a</div>
<div class="t" style="left:1191px;top:534px;font-size:13px;color:#1c1c1c">Alternate Functio...</div>
<div class="t" style="left:1308px;top:534px;font-size:13px;color:#1c1c1c">No pull-up and no...</div>
<div class="t" style="left:1425px;top:534px;font-size:13px;color:#1c1c1c">Low</div>
<div class="t" style="left:1542px;top:534px;font-size:13px;color:#1c1c1c">Disable</div>
<div class="a" style="left:1825px;top:534px;width:12px;height:12px;border:1px solid #404040;background:#fff"></div>
<div class="a" style="left:607px;top:570px;width:1282px;height:1px;background:#dfe4ea"></div>
<div class="t" style="left:608px;top:554px;font-size:13px;color:#1c1c1c">PB8</div>
<div class="t" style="left:724px;top:554px;font-size:13px;color:#1c1c1c">TIM16_CH1</div>
<div class="t" style="left:841px;top:554px;font-size:13px;color:#1c1c1c">n/a</div>
<div class="t" style="left:958px;top:554px;font-size:13px;color:#1c1c1c">n/a</div>
<div class="t" style="left:1075px;top:554px;font-size:13px;color:#1c1c1c">n/a</div>
<div class="t" style="left:1191px;top:554px;font-size:13px;color:#1c1c1c">Alternate Functio...</div>
<div class="t" style="left:1308px;top:554px;font-size:13px;color:#1c1c1c">No pull-up and no...</div>
<div class="t" style="left:1425px;top:554px;font-size:13px;color:#1c1c1c">Low</div>
<div class="t" style="left:1542px;top:554px;font-size:13px;color:#1c1c1c">Disable</div>
<div class="t" style="left:1658px;top:554px;font-size:13px;color:#1c1c1c">BUZZER</div>
<svg style="left:1825px;top:554px" width="12" height="12"><rect x="0" y="0" width="12" height="12" fill="#3aa8db"/><path d="M2.5 6.2l2.5 2.6 4.8-5.4" fill="none" stroke="#fff" stroke-width="1.4"/></svg>
<div class="a" style="left:607px;top:590px;width:1282px;height:1px;background:#dfe4ea"></div>
<div class="t" style="left:608px;top:574px;font-size:13px;color:#1c1c1c">PB13</div>
<div class="t" style="left:724px;top:574px;font-size:13px;color:#1c1c1c">n/a</div>
<div class="t" style="left:841px;top:574px;font-size:13px;color:#1c1c1c">n/a</div>
<div class="t" style="left:958px;top:574px;font-size:13px;color:#1c1c1c">Non-privileged ac...</div>
<div class="t" style="left:1075px;top:574px;font-size:13px;color:#1c1c1c">n/a</div>
<div class="t" style="left:1191px;top:574px;font-size:13px;color:#1c1c1c">External Interrupt...</div>
<div class="t" style="left:1308px;top:574px;font-size:13px;color:#1c1c1c">No pull-up and no...</div>
<div class="t" style="left:1425px;top:574px;font-size:13px;color:#1c1c1c">n/a</div>
<div class="t" style="left:1542px;top:574px;font-size:13px;color:#1c1c1c">n/a</div>
<div class="t" style="left:1658px;top:574px;font-size:13px;color:#1c1c1c">BACK</div>
<svg style="left:1825px;top:574px" width="12" height="12"><rect x="0" y="0" width="12" height="12" fill="#3aa8db"/><path d="M2.5 6.2l2.5 2.6 4.8-5.4" fill="none" stroke="#fff" stroke-width="1.4"/></svg>
<div class="a" style="left:607px;top:610px;width:1282px;height:1px;background:#dfe4ea"></div>
<div class="t" style="left:608px;top:594px;font-size:13px;color:#1c1c1c">PB14</div>
<div class="t" style="left:724px;top:594px;font-size:13px;color:#1c1c1c">n/a</div>
<div class="t" style="left:841px;top:594px;font-size:13px;color:#1c1c1c">n/a</div>
<div class="t" style="left:958px;top:594px;font-size:13px;color:#1c1c1c">Non-privileged ac...</div>
<div class="t" style="left:1075px;top:594px;font-size:13px;color:#1c1c1c">n/a</div>
<div class="t" style="left:1191px;top:594px;font-size:13px;color:#1c1c1c">External Interrupt...</div>
<div class="t" style="left:1308px;top:594px;font-size:13px;color:#1c1c1c">No pull-up and no...</div>
<div class="t" style="left:1425px;top:594px;font-size:13px;color:#1c1c1c">n/a</div>
<div class="t" style="left:1542px;top:594px;font-size:13px;color:#1c1c1c">n/a</div>
<div class="t" style="left:1658px;top:594px;font-size:13px;color:#1c1c1c">TOG_UP</div>
<svg style="left:1825px;top:594px" width="12" height="12"><rect x="0" y="0" width="12" height="12" fill="#3aa8db"/><path d="M2.5 6.2l2.5 2.6 4.8-5.4" fill="none" stroke="#fff" stroke-width="1.4"/></svg>
<div class="a" style="left:607px;top:610px;width:1282px;height:20px;background:#b9d1e8"></div>
<div class="a" style="left:607px;top:630px;width:1282px;height:1px;background:#dfe4ea"></div>
<div class="t" style="left:608px;top:614px;font-size:13px;color:#1c1c1c">PB15</div>
<div class="t" style="left:724px;top:614px;font-size:13px;color:#1c1c1c">n/a</div>
<div class="t" style="left:841px;top:614px;font-size:13px;color:#1c1c1c">n/a</div>
<div class="t" style="left:958px;top:614px;font-size:13px;color:#1c1c1c">Non-privileged ac...</div>
<div class="t" style="left:1075px;top:614px;font-size:13px;color:#1c1c1c">n/a</div>
<div class="t" style="left:1191px;top:614px;font-size:13px;color:#1c1c1c">External Interrupt...</div>
<div class="t" style="left:1308px;top:614px;font-size:13px;color:#1c1c1c">No pull-up and no...</div>
<div class="t" style="left:1425px;top:614px;font-size:13px;color:#1c1c1c">n/a</div>
<div class="t" style="left:1542px;top:614px;font-size:13px;color:#1c1c1c">n/a</div>
<div class="t" style="left:1658px;top:614px;font-size:13px;color:#1c1c1c">TOG_DOWN</div>
<svg style="left:1825px;top:614px" width="12" height="12"><rect x="0" y="0" width="12" height="12" fill="#3aa8db"/><path d="M2.5 6.2l2.5 2.6 4.8-5.4" fill="none" stroke="#fff" stroke-width="1.4"/></svg>
<div class="a" style="left:607px;top:650px;width:1282px;height:1px;background:#dfe4ea"></div>
<div class="t" style="left:608px;top:634px;font-size:13px;color:#1c1c1c">PC0</div>
<div class="t" style="left:724px;top:634px;font-size:13px;color:#1c1c1c">ADC1_IN1</div>
<div class="t" style="left:841px;top:634px;font-size:13px;color:#1c1c1c">n/a</div>
<div class="t" style="left:958px;top:634px;font-size:13px;color:#1c1c1c">n/a</div>
<div class="t" style="left:1075px;top:634px;font-size:13px;color:#1c1c1c">n/a</div>
<div class="t" style="left:1191px;top:634px;font-size:13px;color:#1c1c1c">Analog mode</div>
<div class="t" style="left:1308px;top:634px;font-size:13px;color:#1c1c1c">No pull-up and no...</div>
<div class="t" style="left:1425px;top:634px;font-size:13px;color:#1c1c1c">n/a</div>
<div class="t" style="left:1542px;top:634px;font-size:13px;color:#1c1c1c">n/a</div>
<div class="a" style="left:1825px;top:634px;width:12px;height:12px;border:1px solid #404040;background:#fff"></div>
<div class="a" style="left:607px;top:670px;width:1282px;height:1px;background:#dfe4ea"></div>
<div class="t" style="left:608px;top:654px;font-size:13px;color:#1c1c1c">PC6</div>
<div class="t" style="left:724px;top:654px;font-size:13px;color:#1c1c1c">n/a</div>
<div class="t" style="left:841px;top:654px;font-size:13px;color:#1c1c1c">n/a</div>
<div class="t" style="left:958px;top:654px;font-size:13px;color:#1c1c1c">n/a</div>
<div class="t" style="left:1075px;top:654px;font-size:13px;color:#1c1c1c">High</div>
<div class="t" style="left:1191px;top:654px;font-size:13px;color:#1c1c1c">Output Push Pull</div>
<div class="t" style="left:1308px;top:654px;font-size:13px;color:#1c1c1c">No pull-up and no...</div>
<div class="t" style="left:1425px;top:654px;font-size:13px;color:#1c1c1c">Low</div>
<div class="t" style="left:1542px;top:654px;font-size:13px;color:#1c1c1c">n/a</div>
<div class="t" style="left:1658px;top:654px;font-size:13px;color:#1c1c1c">LED</div>
<svg style="left:1825px;top:654px" width="12" height="12"><rect x="0" y="0" width="12" height="12" fill="#3aa8db"/><path d="M2.5 6.2l2.5 2.6 4.8-5.4" fill="none" stroke="#fff" stroke-width="1.4"/></svg>
<div class="a" style="left:607px;top:690px;width:1282px;height:1px;background:#dfe4ea"></div>
<div class="t" style="left:608px;top:674px;font-size:13px;color:#1c1c1c">PC10</div>
<div class="t" style="left:724px;top:674px;font-size:13px;color:#1c1c1c">UART4_TX</div>
<div class="t" style="left:841px;top:674px;font-size:13px;color:#1c1c1c">n/a</div>
<div class="t" style="left:958px;top:674px;font-size:13px;color:#1c1c1c">n/a</div>
<div class="t" style="left:1075px;top:674px;font-size:13px;color:#1c1c1c">n/a</div>
<div class="t" style="left:1191px;top:674px;font-size:13px;color:#1c1c1c">Alternate Functio...</div>
<div class="t" style="left:1308px;top:674px;font-size:13px;color:#1c1c1c">No pull-up and no...</div>
<div class="t" style="left:1425px;top:674px;font-size:13px;color:#1c1c1c">Low</div>
<div class="t" style="left:1542px;top:674px;font-size:13px;color:#1c1c1c">n/a</div>
<div class="a" style="left:1825px;top:674px;width:12px;height:12px;border:1px solid #404040;background:#fff"></div>
<div class="a" style="left:607px;top:710px;width:1282px;height:1px;background:#dfe4ea"></div>
<div class="t" style="left:608px;top:694px;font-size:13px;color:#1c1c1c">PC11</div>
<div class="t" style="left:724px;top:694px;font-size:13px;color:#1c1c1c">UART4_RX</div>
<div class="t" style="left:841px;top:694px;font-size:13px;color:#1c1c1c">n/a</div>
<div class="t" style="left:958px;top:694px;font-size:13px;color:#1c1c1c">n/a</div>
<div class="t" style="left:1075px;top:694px;font-size:13px;color:#1c1c1c">n/a</div>
<div class="t" style="left:1191px;top:694px;font-size:13px;color:#1c1c1c">Alternate Functio...</div>
<div class="t" style="left:1308px;top:694px;font-size:13px;color:#1c1c1c">No pull-up and no...</div>
<div class="t" style="left:1425px;top:694px;font-size:13px;color:#1c1c1c">Low</div>
<div class="t" style="left:1542px;top:694px;font-size:13px;color:#1c1c1c">n/a</div>
<div class="a" style="left:1825px;top:694px;width:12px;height:12px;border:1px solid #404040;background:#fff"></div>
<div class="a" style="left:723px;top:410px;width:1px;height:304px;background:#dfe4ea"></div>
<div class="a" style="left:840px;top:410px;width:1px;height:304px;background:#dfe4ea"></div>
<div class="a" style="left:957px;top:410px;width:1px;height:304px;background:#dfe4ea"></div>
<div class="a" style="left:1074px;top:410px;width:1px;height:304px;background:#dfe4ea"></div>
<div class="a" style="left:1190px;top:410px;width:1px;height:304px;background:#dfe4ea"></div>
<div class="a" style="left:1307px;top:410px;width:1px;height:304px;background:#dfe4ea"></div>
<div class="a" style="left:1424px;top:410px;width:1px;height:304px;background:#dfe4ea"></div>
<div class="a" style="left:1541px;top:410px;width:1px;height:304px;background:#dfe4ea"></div>
<div class="a" style="left:1657px;top:410px;width:1px;height:304px;background:#dfe4ea"></div>
<div class="a" style="left:1774px;top:410px;width:1px;height:304px;background:#dfe4ea"></div>
<div class="a" style="left:1890px;top:410px;width:8px;height:304px;background:#d7e6f4"></div>
<div class="a" style="left:1890px;top:410px;width:8px;height:191px;background:#3aa8db;border-radius:4px"></div>
<div class="a" style="left:609px;top:723px;width:1287px;height:312px;border:1px solid #8a9096;border-radius:5px"></div>
<div class="a" style="left:612px;top:715px;width:123px;height:14px;background:#fff"></div>
<div class="t" style="left:615px;top:717px;font-size:13px;color:#404040;letter-spacing:-0.1px">PB15 Configuration :</div>
<div class="t" style="left:617px;top:815px;font-size:13px;color:#303030">Pin Privilege access</div>
<div class="t" style="left:617px;top:857px;font-size:13px;color:#303030">GPIO mode</div>
<div class="t" style="left:617px;top:899px;font-size:13px;color:#303030">GPIO Pull-up/Pull-down</div>
<div class="t" style="left:617px;top:940px;font-size:13px;color:#303030">User Label</div>
<div class="a" style="left:1132px;top:810px;width:756px;height:22px;border:1px solid #8c8c8c;background:#fff"></div>
<div class="t" style="left:1134px;top:815px;font-size:13px;color:#303030">Non-privileged access</div>
<svg style="left:1871px;top:818px" width="12" height="7"><path d="M1 1l5 5 5-5" fill="none" stroke="#606060" stroke-width="1.2"/></svg>
<div class="a" style="left:1132px;top:852px;width:756px;height:22px;border:1px solid #8c8c8c;background:#fff"></div>
<div class="t" style="left:1134px;top:857px;font-size:13px;color:#303030">External Interrupt Mode with Rising edge trigger detection</div>
<svg style="left:1871px;top:860px" width="12" height="7"><path d="M1 1l5 5 5-5" fill="none" stroke="#606060" stroke-width="1.2"/></svg>
<div class="a" style="left:1132px;top:894px;width:756px;height:22px;border:1px solid #8c8c8c;background:#fff"></div>
<div class="a" style="left:1133px;top:895px;width:734px;height:20px;background:#dae8f5"></div>
<div class="t" style="left:1134px;top:899px;font-size:13px;color:#303030">No pull-up and no pull-down</div>
<svg style="left:1871px;top:902px" width="12" height="7"><path d="M1 1l5 5 5-5" fill="none" stroke="#606060" stroke-width="1.2"/></svg>
<div class="a" style="left:1132px;top:936px;width:756px;height:20px;border:1px solid #8c8c8c;background:#fff"></div>
<div class="t" style="left:1133px;top:940px;font-size:13px;color:#303030">TOG_DOWN</div>
<!-- ===== STATUS BAR ===== -->
<div class="a" style="left:0;top:1053px;width:1920px;height:25px;background:#f0f0f0;border-top:1px solid #dadada"></div>
<div class="a" style="left:0;top:1078px;width:1920px;height:2px;background:#363636"></div>
<div class="a" style="left:1220px;top:1078px;width:48px;height:2px;background:#6a6a6a"></div>
<div class="a" style="left:48px;top:1078px;width:288px;height:2px;background:#e8e8e8"></div>
<svg style="left:2px;top:1055px" width="16" height="16"><path d="M1.5 3.5h4l1.5 -1.5h4l1.5 1.5h1.5v10h-12.5z" fill="#f4d880" stroke="#b89040" stroke-width="0.8"/><rect x="1.5" y="4.5" width="13" height="9.5" rx="1" fill="#c4daf6" stroke="#4860a8"/></svg>
<div class="t" style="left:24px;top:1060px;letter-spacing:-0.5px">I2C_TwoBoards_ComDMA</div>
<div class="a" style="left:1635px;top:1060px;width:2px;height:2px;background:#c4bcae"></div><div class="a" style="left:1635px;top:1064px;width:2px;height:2px;background:#c4bcae"></div><div class="a" style="left:1635px;top:1068px;width:2px;height:2px;background:#c4bcae"></div><div class="a" style="left:1635px;top:1072px;width:2px;height:2px;background:#c4bcae"></div>

</body></html>
